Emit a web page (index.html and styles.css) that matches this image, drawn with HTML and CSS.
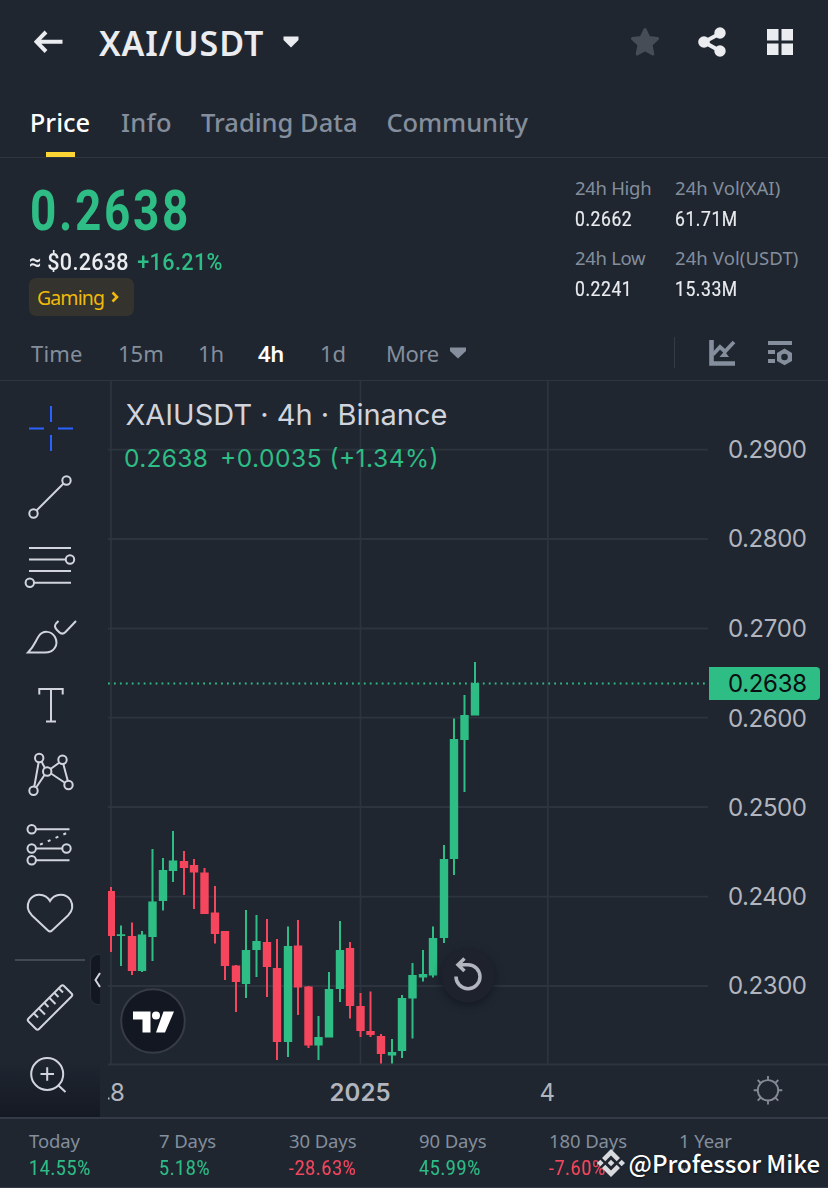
FILE: index.html
```html
<!DOCTYPE html>
<html lang="en">
<head>
<meta charset="utf-8">
<title>XAI/USDT</title>
<link rel="stylesheet" href="styles.css">
</head>
<body>
<main class="app">
  <header class="header">
    <svg class="back" width="30" height="24" viewBox="34 30 30 24"><path d="M62.500 41.700H38M46 32L36.500 41.700L46 51.500" fill="none" stroke="#eaecef" stroke-width="4"/></svg>
    <h1 class="pair">XAI/USDT</h1>
    <svg class="caret" width="16" height="12" viewBox="0 0 16 12"><path d="M0.500 .5H15.500V4L8 11.500L.5 4Z" fill="#eaecef"/></svg>
    <div class="actions">
      <svg width="30" height="30" viewBox="0 0 30 30"><path d="M15 2.500L18.800 10.500L27.500 11.600L21 17.700L22.800 27L15 22.600L7.200 27L9 17.700L2.500 11.600L11.200 10.500Z" fill="#474d57" stroke="#474d57" stroke-width="3" stroke-linejoin="round"/></svg>
      <svg width="30" height="30" viewBox="1 0 30 30"><path d="M23 6.500L7 15L23 24" fill="none" stroke="#eaecef" stroke-width="4"/><g fill="#eaecef"><circle cx="23" cy="6" r="5.700"/><circle cx="7" cy="15" r="5.800"/><circle cx="23" cy="24" r="5.700"/></g></svg>
      <svg width="30" height="30" viewBox="0 0 30 30"><path d="M2 2H13.500V13.500H2ZM16.500 2H28V13.500H16.500ZM2 16.500H13.500V28H2ZM16.500 16.500H28V28H16.500Z" fill="#eaecef"/></svg>
    </div>
  </header>

  <nav class="tabs">
    <a class="tab active">Price</a>
    <a class="tab info">Info</a>
    <a class="tab trading">Trading Data</a>
    <a class="tab community">Community</a>
  </nav>

  <section class="summary">
    <div class="quote">
      <div class="last">0.2638</div>
      <div class="approx"><span class="fiat">≈ $0.2638</span><span class="change up">+16.21%</span></div>
      <div class="tag"><span>Gaming</span><svg width="9" height="12" viewBox="0 0 9 12"><path d="M1.500 1.500L6 6L1.500 10.500" fill="none" stroke="#f0b90b" stroke-width="2.600"/></svg></div>
    </div>
    <dl class="day">
      <div class="range"><dt>24h High</dt><dd>0.2662</dd></div>
      <div><dt>24h Vol(XAI)</dt><dd>61.71M</dd></div>
      <div class="range"><dt>24h Low</dt><dd>0.2241</dd></div>
      <div><dt>24h Vol(USDT)</dt><dd>15.33M</dd></div>
    </dl>
  </section>

  <nav class="intervals">
    <span class="time">Time</span><span class="m15">15m</span><span class="h1">1h</span><span class="h4 on">4h</span><span class="d1">1d</span>
    <span class="more">More</span>
    <svg class="more-caret" width="16" height="12" viewBox="0 0 16 12"><path d="M0 .5H16V4L8 11.500L0 4Z" fill="#848e9c"/></svg>
    <div class="chart-tools">
      <svg width="28" height="28" viewBox="708 339 28 28"><g fill="none" stroke="#848e9c"><path d="M711.500 340V363.500H735" stroke-width="4.600"/><path d="M713 354.500L720 347L725 351.500L734 342" stroke-width="3.800"/></g><path d="M719.500 357L724.500 351L729 357Z" fill="#848e9c"/></svg>
      <svg width="28" height="28" viewBox="766 339 28 28"><g fill="#848e9c"><path d="M768 341H792V345H768ZM768 350H775V354H768ZM768 359H775V363H768Z"/><path fill-rule="evenodd" d="M784.500 348.500L792 353V361L784.500 365.300L777 361V353ZM784.500 353.700A3.300 3.300 0 1 0 784.500 360.300A3.300 3.300 0 1 0 784.500 353.700Z"/></g></svg>
    </div>
  </nav>

  <section class="board">
    <aside class="toolbar">
      <svg viewBox="15 394 70 69"><path d="M51 406V422M51 435V451M29 428.500H44M58 428.500H73" stroke="#2962ff" stroke-width="2"/></svg>
      <svg viewBox="15 463 70 69"><path d="M36.500 510.500L63.500 483.500"/><circle cx="33.500" cy="513.500" r="4.200"/><circle cx="66.500" cy="480.500" r="4.200"/></svg>
      <svg viewBox="15 532 70 69"><path d="M29 548H71M29 559.500H66M29 571H71M34 582.700H71"/><circle cx="70" cy="559.500" r="4.200"/><circle cx="29.800" cy="582.700" r="4.200"/></svg>
      <svg viewBox="15 601 70 69"><path d="M28 652.500C35 645 35 642 38.500 636.500C43 630 51 630.500 55 637C59 645 54 652.500 45 652.500ZM58.500 621L56 623.500C54 626 55 628 57 630L59 632C61 634 63.500 634 65.500 632L76 621"/></svg>
      <svg viewBox="15 670 70 69"><path d="M39.300 694.500V689H62.700V694.500M51 689V721.500M46 721.500H56"/></svg>
      <svg viewBox="15 739 70 69"><path d="M38.700 762L34.300 786.500M36.500 787L44.500 775M41.500 761.500L45 768.200M50.500 769L59.500 762.500M51 773.500L64.500 782.500M63.300 764L67.700 780.500"/><circle cx="39.200" cy="758" r="4.200"/><circle cx="62.500" cy="759.800" r="4.200"/><circle cx="47.200" cy="771.500" r="4.200"/><circle cx="33.500" cy="790.700" r="4.200"/><circle cx="68.500" cy="785" r="4.200"/></svg>
      <svg viewBox="15 808 70 69"><path d="M36 829.300H69.500M36 848.500H62M36 860.300H69.500"/><path d="M40 844.700L69 832" stroke-dasharray="3 5.500"/><circle cx="31.700" cy="829.300" r="4.200"/><circle cx="31.700" cy="848.500" r="4.200"/><circle cx="66.500" cy="848.500" r="4.200"/><circle cx="31.700" cy="860.300" r="4.200"/></svg>
      <svg viewBox="15 877 70 69"><path d="M50 901C45 892.500 34 893 29.500 900C26.500 905.500 27.500 911 32 915.500L48 930.500Q50 932.300 52 930.500L68 915.500C72.500 911 73.500 905.500 70.500 900C66 893 55 892.500 50 901Z"/></svg>
      <hr class="rule">
      <svg viewBox="15 974 70 69"><path d="M28.500 1018.500L61 986Q62.500 984.500 64 986L71.500 993.500Q73 995 71.500 996.500L39 1029Q37.500 1030.500 36 1029L28.500 1021.500Q27 1020 28.500 1018.500ZM34 1013.500L38 1017.500M39 1008.500L45 1014.500M44.500 1003L48.500 1007M49.500 998L55.500 1004M54.500 993L58.500 997M59 988.500L63 992.500"/></svg>
      <svg viewBox="15 1043 70 69"><circle cx="47.200" cy="1074" r="16"/><path d="M40.500 1074H54M47.200 1067.300V1080.700M58.500 1085.500L65.500 1092"/></svg>
      <div class="collapse"><svg width="9" height="16" viewBox="0 0 9 16"><path d="M8 1L3.500 8L8 15"/></svg></div>
    </aside>

    <svg class="chart" width="728" height="736" viewBox="100 381 728 736">
      <g fill="none" stroke="#2d343e" stroke-width="1.800">
        <path d="M111 381V1064M360.500 381V1064M547.800 381V1064"/>
        <path d="M108 449.700H708M108 539H708M108 628.500H708M108 717.700H708M108 807H708M108 896.700H708M108 986H708M108 1064.500H828"/>
      </g>
      <g fill="none" stroke="#f6465d">
        <path stroke-width="2" d="M111 887V952M132 922.500V975M184 851V895M194 859V909M204.500 868V914M215 886V943.500M225 931V980M236 965V1012M267 919V997M277 939V1060M298 920V1015M308.500 986V1048M350 942V1018.500M360.500 993V1037M370.500 991.500V1037M381 1034V1063.500"/>
        <path stroke-width="8.400" d="M132 936V971M184 861V868M194 865V872.500M204.500 872.500V914M215 912.500V934M225 931V966M236 965.500V982M267 942V967M277 968V1042M298 945.500V987.500M308.500 986.500V1045.500M350 948V1006M360.500 1006V1031M370.500 1031V1035M381 1036V1054"/>
        <path stroke-width="7" d="M111.500 891V936"/>
      </g>
      <g fill="none" stroke="#2ebd85">
        <path stroke-width="2" d="M121 925.500V966M142 931V972M152.500 849V961M163 858V910.500M173 831V882M246 910V998M256.500 915V977M288 926.500V1057M318.500 1016V1060M329 972V1037M340 921V1002M392 1039V1063.500M402 995V1058M412.500 963V1038.500M423 950V981.500M433 926.500V977.500M444 845V943M454 718.500V875M464.500 695V792M475 662V715"/>
        <path stroke-width="8.400" d="M121 934.300V936M142 934.500V971M152.500 901.500V937M163 870V901M173 860.500V871M246 950V984M256.500 941V950M288 946V1042M318.500 1037V1045.500M329 989V1037.500M340 950V989M392 1052V1055.500M402 998V1051M412.500 975V998.500M423 974V977.500M433 938V975.500M444 859V938M454 739V859M464.500 715V740M475 683V715.500"/>
        <path d="M108 683.500H706" stroke-width="1.800" stroke-dasharray="1.800 4.150"/>
      </g>
      <path d="M709 667H816Q820 667 820 671V696Q820 700 816 700H709Z" fill="#2ebd85"/>
      <g class="axis">
        <text x="728" y="458" textLength="79">0.2900</text>
        <text x="728" y="547.300" textLength="79">0.2800</text>
        <text x="728" y="636.500" textLength="79">0.2700</text>
        <text x="728" y="692.300" textLength="79" fill="#0b0e11">0.2638</text>
        <text x="728" y="726.500" textLength="79">0.2600</text>
        <text x="728" y="815.500" textLength="79">0.2500</text>
        <text x="728" y="905" textLength="79">0.2400</text>
        <text x="728" y="994.300" textLength="79">0.2300</text>
        <text x="110" y="1100.500">8</text>
        <text x="329.500" y="1100.500" textLength="61" font-weight="600">2025</text>
        <text x="539.500" y="1100.500">4</text>
      </g>
      <path d="M108 1098.500H109.500" stroke="#b2b5be" stroke-width="2"/>
      <text class="symbol" x="125.500" y="425" textLength="322">XAIUSDT · 4h · Binance</text>
      <g class="delta"><text x="124" y="466.500" textLength="84">0.2638</text><text x="220" y="466.500" textLength="218.500">+0.0035 (+1.34%)</text></g>
      <circle cx="153" cy="1021" r="31.800" fill="#131722" stroke="#363b45" stroke-width="2"/>
      <path d="M133 1011.500H150.500V1032.500H142.500V1019.500H133ZM163.500 1011.500H174L165 1032.500H156Z" fill="#fff"/><circle cx="156" cy="1015.500" r="4" fill="#fff"/>
      <circle class="reset" cx="468" cy="975.500" r="27" fill="#1e222d"/>
      <path d="M456 976.500A12 12 0 1 0 468 964.700H458M464.500 958.500L458 964.700L464.500 971" fill="none" stroke="#b2b5be" stroke-width="3.500"/>
      <g fill="none" stroke="#848894" stroke-width="1.900"><circle cx="768" cy="1090.300" r="10.200"/><path d="M768 1080V1076M768 1100.500V1104.500M757.700 1090.300H753.700M778.300 1090.300H782.300M760.700 1083L757.700 1080M775.300 1083L778.300 1080M760.700 1097.600L757.700 1100.600M775.300 1097.600L778.300 1100.600"/></g>
    </svg>
  </section>

  <footer class="periods">
    <div><span>Today</span><b class="up">14.55%</b></div>
    <div><span>7 Days</span><b class="up">5.18%</b></div>
    <div><span>30 Days</span><b class="down">-28.63%</b></div>
    <div><span>90 Days</span><b class="up">45.99%</b></div>
    <div><span>180 Days</span><b class="down">-7.60%</b></div>
    <div><span>1 Year</span><b class="none">--</b></div>
  </footer>

  <div class="credit">
    <svg width="28" height="28" viewBox="0 0 28 28"><path d="M14 0L23 9L19.700 12.300L14 6.600L8.300 12.300L5 9ZM14 28L23 19L19.700 15.700L14 21.400L8.300 15.700L5 19ZM14 10.700L17.300 14L14 17.300L10.700 14ZM3.300 10.700L6.600 14L3.300 17.300L0 14ZM24.700 10.700L28 14L24.700 17.300L21.400 14Z" fill="#d9dadd"/></svg>
    <span>@Professor Mike</span>
  </div>
</main>
</body>
</html>
```
FILE: styles.css
```css
* { box-sizing: border-box; }
body { margin: 0; background: #1f2630; color: #eaecef; font-family: "Noto Sans", sans-serif; }
.app { position: relative; width: 828px; height: 1188px; display: flex; flex-direction: column; overflow: hidden; white-space: nowrap; }
.app > * { flex: none; }
svg { display: block; flex: none; }
.up { color: #2ebd85; }
.down { color: #f6465d; }

.header { height: 84px; display: flex; align-items: center; padding: 0 33px 0 34px; }
.pair { margin: 2px 0 0 35px; width: 165px; font-size: 34px; line-height: 40px; font-weight: 600; letter-spacing: .9px; }
.caret { margin-left: 19px; }
.actions { margin-left: auto; display: flex; gap: 37.500px; }

.tabs { height: 74px; display: flex; padding-left: 29px; border-bottom: 1px solid #2e353f; font-size: 25.500px; line-height: 36px; font-weight: 500; color: #848e9c; }
.tab { height: 73px; padding-top: 20px; }
.info { margin-left: 30px; width: 51px; letter-spacing: .3px; }
.trading { margin-left: 29px; width: 156px; }
.community { margin-left: 29.500px; letter-spacing: -.1px; }
.active { width: 62px; color: #fff; display: flex; flex-direction: column; align-items: center; justify-content: space-between; }
.active::after { content: ""; width: 29px; height: 5px; background: #fcd535; }

.summary { height: 167px; display: flex; padding-left: 29px; }
.quote { width: 546px; padding-top: 21px; }
.last { height: 64px; font: 700 55px/64px Roboto, sans-serif; color: #2ebd85; letter-spacing: 3.200px; transform: scaleX(.835); transform-origin: left; margin-left: 1px; }
.approx { display: flex; margin-top: 5px; font: 500 23.500px/28px Roboto, sans-serif; letter-spacing: .3px; transform: scaleX(.92); transform-origin: left; gap: 9px; }
.change { letter-spacing: .4px; }
.tag { display: flex; align-items: center; gap: 7px; width: 105px; height: 38px; margin-top: 2px; padding-left: 8px; border-radius: 7px; background: #34332d; color: #f0b90b; font-size: 19.500px; letter-spacing: -.9px; }
.day { margin: 17px 0 0; display: grid; grid-template-columns: 100px auto; grid-auto-rows: 69.500px; align-content: start; font-size: 18.500px; }
.day dt { color: #848e9c; line-height: 26px; letter-spacing: .1px; }
.day .range dt { letter-spacing: -.3px; }
.day dd { margin: 6px 0 0; font: 400 19.500px/26px Roboto, sans-serif; letter-spacing: .6px; transform: scaleX(.9); transform-origin: left; -webkit-text-stroke: .2px currentColor; }

.intervals { height: 56px; display: flex; align-items: center; padding: 0 34px 0 31px; border-bottom: 1px solid #2e353f; color: #848e9c; font-size: 22px; }
.time { width: 52px; letter-spacing: .2px; }
.m15 { margin-left: 35px; width: 44px; }
.h1 { margin-left: 36px; width: 25px; }
.h4 { margin-left: 35px; width: 26px; }
.d1 { margin-left: 36px; width: 25px; }
.more { margin-left: 41px; width: 52px; letter-spacing: -.4px; }
.on { color: #fff; font-weight: 600; letter-spacing: -.4px; }
.more-caret { margin-left: 12px; }
.chart-tools { margin-left: auto; display: flex; align-items: center; gap: 30px; height: 31px; padding-left: 33px; border-left: 1px solid #343b46; }

.board { display: flex; height: 736px; }
.toolbar { position: relative; width: 100px; padding: 13px 15px 0; background: linear-gradient(transparent 680px, #151924 736px); }
.toolbar svg { width: 70px; height: 69px; fill: none; stroke: #d1d4dc; stroke-width: 2; }
.rule { height: 2px; margin: 13px 0; border: 0; background: #434953; }
.collapse { position: absolute; left: 90px; top: 573px; width: 10px; height: 51px; display: flex; align-items: center; border-radius: 8px 0 0 8px; background: #131722; border: 1px solid #292f39; border-right: 0; }
.toolbar .collapse svg { width: 9px; height: 16px; margin-left: 1px; }
.axis { font: 400 24px Inter, sans-serif; fill: #b2b5be; }
.symbol { font: 400 29px Inter, sans-serif; fill: #d1d4dc; }
.delta { font: 400 24.500px Inter, sans-serif; fill: #2ebd85; }
.reset { filter: drop-shadow(0 3px 4px #141923); }

.periods { height: 71px; display: grid; grid-template-columns: repeat(6, 130px); padding: 9px 0 0 29px; border-top: 2px solid #343b46; border-bottom: 1px solid #343b46; }
.periods div { display: flex; flex-direction: column; }
.periods span { font-size: 18.500px; line-height: 26px; color: #848e9c; letter-spacing: -.1px; }
.periods b { margin-top: 2px; font: 400 19.500px/26px Roboto, sans-serif; letter-spacing: .8px; transform: scaleX(.91); transform-origin: left; -webkit-text-stroke: .2px currentColor; }
.periods .none { color: #848e9c; }

.credit { position: absolute; right: 8px; bottom: 7px; display: flex; align-items: center; gap: 4px; font: 500 24px/36px "Noto Sans CJK SC", sans-serif; color: #fff; text-shadow: 0 1px 2px #0008; }
```
